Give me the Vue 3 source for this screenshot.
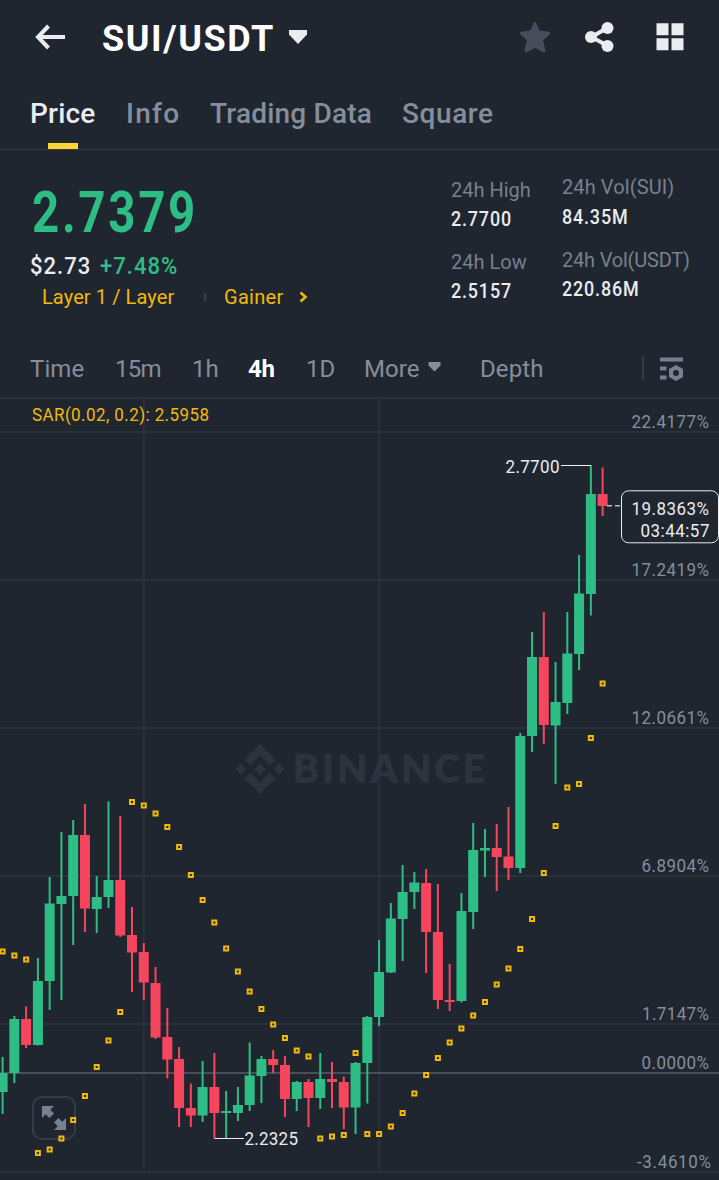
<script setup>
const STEP = 11.765
const FIRST = 2.6
const xAt = (i) => FIRST + STEP * i

// direction, high, body top, body bottom, low (chart units)
const candles = [
  ['up', 1057, 1073, 1092, 1114],
  ['up', 1016, 1019, 1073, 1083],
  ['down', 1006.5, 1019, 1045, 1048],
  ['up', 958, 981, 1045, 1045.5],
  ['up', 877, 903.5, 981, 1010],
  ['up', 832, 896, 904, 1000],
  ['up', 820, 835, 896, 945],
  ['down', 804, 835, 908.5, 932],
  ['up', 876, 897, 909, 933],
  ['up', 801.5, 880, 897, 908],
  ['down', 816, 880, 935.5, 937],
  ['down', 907, 935, 952.5, 992],
  ['down', 943, 952, 982.5, 1000],
  ['down', 967, 983, 1037.5, 1039],
  ['down', 1008, 1037, 1059.5, 1078.5],
  ['down', 1047, 1059, 1108, 1127],
  ['down', 1083.5, 1108, 1115.5, 1127],
  ['up', 1061, 1087, 1115.5, 1122],
  ['down', 1053, 1087, 1113, 1138.5],
  ['up', 1091, 1111, 1113, 1138],
  ['up', 1087, 1105, 1113, 1121],
  ['up', 1042.5, 1075.5, 1105, 1111],
  ['up', 1056, 1059, 1076, 1103],
  ['down', 1050, 1059, 1065, 1073],
  ['down', 1056, 1065, 1099, 1117],
  ['up', 1081, 1082, 1099, 1111],
  ['down', 1079, 1082, 1098, 1127],
  ['up', 1053, 1079, 1098, 1109],
  ['down', 1062, 1079, 1082, 1108],
  ['down', 1076.5, 1082, 1107.5, 1129],
  ['up', 1062, 1063, 1107.5, 1134],
  ['up', 1016, 1017, 1063, 1103.5],
  ['up', 940, 972, 1017, 1026],
  ['up', 903, 918.5, 972.5, 973],
  ['up', 865, 892, 919, 961],
  ['up', 872, 882.5, 892, 909],
  ['down', 869, 883, 932, 973],
  ['down', 884, 932, 1000, 1009],
  ['down', 964, 1000, 1002, 1011],
  ['up', 893, 911, 1001, 1002.5],
  ['up', 823, 850, 912, 929],
  ['up', 829, 848, 850.5, 877],
  ['down', 824, 848, 857, 891],
  ['down', 807, 856.5, 868, 880],
  ['up', 733, 736, 868, 873],
  ['up', 632, 657, 736, 752],
  ['down', 612, 657, 725, 744],
  ['up', 662, 702, 725.5, 784],
  ['up', 612, 653.5, 703, 714],
  ['up', 555, 593.5, 654, 670],
  ['up', 465, 494, 594, 615.5],
  ['down', 467.5, 494, 506, 516],
].map(([dir, high, top, bottom, low], i) => ({ dir, high, top, bottom, low, x: xAt(i) }))

const sar = [
  951.5, 955.5, 959.5, 1153, 1149.5, 1138.5, 1120, 1096, 1067, 1040.5, 1012, 802, 805.5,
  813.5, 827, 847, 875, 900, 922.5, 948.5, 971.5, 991.5, 1009, 1024.5, 1038, 1050.5, 1056.5,
  1138.5, 1136.5, 1135, 1053, 1134, 1134, 1126.5, 1113, 1093.5, 1075, 1058, 1042.5, 1028.5,
  1015.5, 1002, 984.5, 968.5, 949, 919, 873, 826, 787.5, 784, 738, 683.5,
].map((y, i) => ({ x: xAt(i), y }))

const gridY = [398, 432, 580, 728, 876, 1024, 1172]
const gridX = [143.8, 379.2]

// Chart lettering is condensed horizontally and tracked out to a fixed width
const CONDENSE = 0.92
const labels = [
  { cls: 'sar-label', text: 'SAR(0.02, 0.2): 2.5958', x: 32, y: 421, w: 177 },
  { cls: 'axis', text: '22.4177%', x: 631.5, y: 428, w: 77.5 },
  { cls: 'axis', text: '17.2419%', x: 631.5, y: 576, w: 77.5 },
  { cls: 'axis', text: '12.0661%', x: 631.5, y: 724, w: 77.5 },
  { cls: 'axis', text: '6.8904%', x: 641.5, y: 872, w: 67.5 },
  { cls: 'axis', text: '1.7147%', x: 642, y: 1020, w: 67 },
  { cls: 'axis', text: '0.0000%', x: 641.5, y: 1069, w: 67.5 },
  { cls: 'axis', text: '-3.4610%', x: 637, y: 1168, w: 74 },
  { cls: 'note', text: '2.7700', x: 505.5, y: 473, w: 54 },
  { cls: 'note', text: '2.2325', x: 244.5, y: 1145, w: 53.5 },
  { cls: 'note', text: '19.8363%', x: 631.5, y: 515, w: 77.5 },
  { cls: 'note', text: '03:44:57', x: 640.5, y: 537, w: 69 },
]

const tabs = ['Price', 'Info', 'Trading Data', 'Square']
const stats = [
  { name: '24h High', value: '2.7700' },
  { name: '24h Vol(SUI)', value: '84.35M' },
  { name: '24h Low', value: '2.5157' },
  { name: '24h Vol(USDT)', value: '220.86M' },
]
</script>

<template>
  <div class="screen">
    <header class="topbar">
      <svg class="back" width="32" height="26" viewBox="0 0 32 26">
        <path d="M14.5 2 L4 13 L14.5 24 M4 13 H31" fill="none" stroke="#eaecef" stroke-width="4" />
      </svg>
      <h1 class="pair">SUI/USDT</h1>
      <svg class="caret" width="18" height="14" viewBox="0 0 18 14">
        <path d="M0 0H18V4.5L9 14L0 4.5Z" fill="#eaecef" />
      </svg>
      <div class="actions">
        <svg width="32" height="32" viewBox="0 0 32 32">
          <path d="M16 2.500 L19.600 11 L29.500 12.300 L22.500 19 L25 30 L16 25.200 L7 30 L9.500 19 L2.500 12.300 L12.400 11Z" fill="#474d5c" stroke="#474d5c" stroke-width="3" stroke-linejoin="round" />
        </svg>
        <svg width="32" height="32" viewBox="0 0 32 32">
          <path d="M25 6.500 L8.500 16 L25 25" fill="none" stroke="#eaecef" stroke-width="4" />
          <circle cx="24.500" cy="6.900" r="6" fill="#eaecef" />
          <circle cx="8" cy="16" r="6" fill="#eaecef" />
          <circle cx="24.500" cy="25" r="6" fill="#eaecef" />
        </svg>
        <svg width="32" height="32" viewBox="0 0 32 32">
          <path d="M2.500 2.300h12v12h-12z M17.500 2.300h12v12h-12z M2.500 17.300h12v12h-12z M17.500 17.300h12v12h-12z" fill="#eaecef" />
        </svg>
      </div>
    </header>

    <nav class="tabs">
      <a v-for="(t, i) in tabs" :key="t" class="tab" :class="['t' + i, { active: i === 0 }]">{{ t }}</a>
    </nav>

    <section class="summary">
      <div class="quote">
        <div class="price">2.7379</div>
        <div class="sub"><span class="usd">$2.73</span><span class="chg">+7.48%</span></div>
        <div class="tags">
          <span class="layer">Layer 1 / Layer</span>
          <i class="tick"></i>
          <span class="gainer">Gainer</span>
          <svg width="9" height="12" viewBox="0 0 9 12">
            <path d="M1.500 1.500 L6.500 6 L1.500 10.500" fill="none" stroke="#f0b90b" stroke-width="2.600" />
          </svg>
        </div>
      </div>
      <dl class="stats">
        <div v-for="(s, i) in stats" :key="s.name" class="stat" :class="'s' + i">
          <dt>{{ s.name }}</dt>
          <dd>{{ s.value }}</dd>
        </div>
      </dl>
    </section>

    <div class="intervals">
      <span>Time</span>
      <span class="narrow">15m</span>
      <span>1h</span>
      <span class="on">4h</span>
      <span>1D</span>
      <span class="more">More
        <svg width="13" height="10" viewBox="0 0 13 10"><path d="M0.500 0H12.500V3.500L6.500 9.500L0.500 3.500Z" fill="#848e9c" /></svg>
      </span>
      <span>Depth</span>
      <i class="bar"></i>
      <svg class="settings" width="26" height="26" viewBox="0 0 26 26">
        <path d="M1 1.500H24V5.500H1Z M1 10.500H7.500V14.500H1Z M1 19.500H7.500V23.500H1Z" fill="#76808f" />
        <path fill-rule="evenodd" d="M17 9 L24 13 V21 L17 25 L10 21 V13Z M17 14 A3 3 0 1 0 17 20 A3 3 0 1 0 17 14Z" fill="#76808f" />
      </svg>
    </div>

    <svg class="chart" width="719" height="783" viewBox="0 397 719 783">
      <g class="grid">
        <line v-for="y in gridY" :key="'h' + y" x1="0" x2="719" :y1="y" :y2="y" />
        <line v-for="x in gridX" :key="'v' + x" :x1="x" :x2="x" y1="398" y2="1172" />
      </g>

      <g class="mark">
        <path d="M260 744 L275.500 759.500 L269.800 765.200 L260 755.500 L250.200 765.200 L244.500 759.500Z" />
        <path d="M260 794 L275.500 778.500 L269.800 772.800 L260 782.500 L250.200 772.800 L244.500 778.500Z" />
        <path d="M260 763.300 L265.700 769 L260 774.700 L254.300 769Z M241 763.300 L246.700 769 L241 774.700 L235.300 769Z M279 763.300 L284.700 769 L279 774.700 L273.300 769Z" />
        <text x="293" y="783" textLength="192">BINANCE</text>
      </g>

      <line class="zero" x1="0" x2="719" y1="1073" y2="1073" />

      <g class="expand">
        <rect x="33" y="1097" width="42" height="42" rx="9" />
        <path d="M42 1106H54L50.300 1109.700L54 1113.500L49.500 1118L45.700 1114.200L42 1118Z M66 1130H54L57.700 1126.300L54 1122.500L58.500 1118L62.300 1121.800L66 1118Z" />
      </g>

      <g v-for="(c, i) in candles" :key="'c' + i" :class="c.dir">
        <rect :x="c.x - 1" :y="c.high" width="2" :height="c.low - c.high" />
        <rect :x="c.x - 5" :y="c.top" width="10" :height="c.bottom - c.top" />
      </g>

      <rect v-for="(p, i) in sar" :key="'p' + i" class="sar" :x="p.x - 2" :y="p.y - 2" width="4" height="4" />

      <path class="lead" d="M561 465.500H591 M214.500 1138.500H244" />
      <line class="now" x1="607" x2="621" y1="505.700" y2="505.700" />
      <rect class="now-box" x="621.500" y="490.800" width="97" height="52" rx="7" />

      <text
        v-for="l in labels"
        :key="l.text + l.y"
        :class="l.cls"
        :transform="`translate(${l.x} ${l.y}) scale(${CONDENSE} 1)`"
        :textLength="l.w / CONDENSE"
      >{{ l.text }}</text>
    </svg>
  </div>
</template>

<style>
body {
  background: #202630;
}
</style>

<style scoped>
.screen {
  width: 719px;
  height: 1180px;
  overflow: hidden;
  background: #202630;
  color: #eaecef;
  font-family: Roboto, "Liberation Sans", sans-serif;
}
.topbar {
  display: flex;
  align-items: center;
  height: 76px;
  box-sizing: border-box;
  padding: 0 33px 0 34px;
}
.back {
  margin-top: -2px;
}
.pair {
  margin: 2px 0 0 36px;
  width: 187px;
  font-size: 36px;
  line-height: 48px;
  font-weight: 700;
  letter-spacing: 1.600px;
  color: #fff;
}
.caret {
  margin-top: -2px;
}
.actions {
  display: flex;
  gap: 32px;
  margin: -2px 0 0 auto;
}
.actions svg:last-child {
  margin-left: 7px;
}
.tabs {
  display: grid;
  grid-template-columns: 96px 84px 192px 1fr;
  height: 74px;
  box-sizing: border-box;
  padding-left: 30px;
  border-bottom: 1px solid #333943;
  font-size: 28px;
  font-weight: 500;
  line-height: 76px;
  color: #848e9c;
}
.tab {
  position: relative;
  white-space: nowrap;
  height: 73px;
}
.t0 {
  letter-spacing: 0.200px;
}
.t1 {
  letter-spacing: 1.300px;
}
.t2 {
  letter-spacing: 0.200px;
}
.t3 {
  letter-spacing: 0.600px;
}
.active {
  color: #eaecef;
}
.active::after {
  content: "";
  position: absolute;
  left: 18px;
  bottom: 0;
  width: 30px;
  height: 6px;
  background: #fcd535;
}
.summary {
  display: grid;
  grid-template-columns: 451px 1fr;
  height: 190px;
}
.price {
  width: 240px;
  margin: 31px 0 0 32px;
  font-size: 56.500px;
  line-height: 64px;
  font-weight: 700;
  letter-spacing: 3.200px;
  transform: scaleX(0.84);
  transform-origin: left;
  color: #2ebd85;
}
.sub {
  display: flex;
  gap: 11px;
  width: 260px;
  margin: 8px 0 0 30px;
  font-size: 24px;
  line-height: 26px;
  font-weight: 500;
  letter-spacing: 1.100px;
  transform: scaleX(0.92);
  transform-origin: left;
}
.usd {
  width: 65px;
}
.chg {
  color: #2ebd85;
}
.tags {
  display: flex;
  align-items: center;
  margin: 4px 0 0 42px;
  font-size: 20px;
  line-height: 28px;
  letter-spacing: 0.100px;
  color: #f0b90b;
}
.layer {
  width: 162px;
}
.tick {
  width: 2px;
  height: 8px;
  margin-right: 18px;
  background: #3a404c;
}
.gainer {
  width: 75px;
  letter-spacing: 0.300px;
}
.stats {
  display: grid;
  grid-template-columns: 111px 1fr;
  grid-template-rows: 72px 72px;
  align-content: start;
  margin: 0;
  padding-top: 26px;
}
.stat dt {
  font-size: 20px;
  line-height: 28px;
  color: #76808f;
}
.s1 dt {
  letter-spacing: 0.100px;
}
.stat dd {
  margin: 1px 0 0;
  font-size: 19.500px;
  line-height: 29px;
  font-weight: 500;
  letter-spacing: 0.900px;
  transform: scaleX(0.92);
  transform-origin: left;
}
.s1 {
  margin-top: -3px;
}
.s3 {
  margin-top: -2px;
}
.s3 dt {
  letter-spacing: -0.200px;
}
.s1 dd {
  margin-top: 2px;
}
.intervals {
  display: grid;
  grid-template-columns: 85px 77px 56px 58px 58px 116px 162px 17px 1fr;
  align-items: center;
  height: 57px;
  padding-left: 30px;
  font-size: 24px;
  line-height: 59px;
  letter-spacing: 0.100px;
  color: #848e9c;
}
.narrow {
  letter-spacing: -0.700px;
}
.on {
  color: #fff;
  font-weight: 700;
  letter-spacing: -0.300px;
}
.more svg {
  margin-left: 2px;
  vertical-align: 5px;
}
.bar {
  width: 2px;
  height: 24px;
  margin-top: -3px;
  background: #363c47;
}
.settings {
  margin-top: -2px;
}
.chart {
  display: block;
}
.chart text {
  font-family: Roboto, "Liberation Sans", sans-serif;
  font-size: 18.500px;
}
.grid line {
  stroke: #2b313c;
  stroke-width: 2;
}
.zero {
  stroke: #474d59;
  stroke-width: 2;
}
.mark {
  fill: #2d333e;
}
.chart .mark text {
  font-family: Lato, "Noto Sans", sans-serif;
  font-size: 39px;
  font-weight: 800;
}
.expand rect {
  fill: none;
  stroke: #363c47;
  stroke-width: 2;
}
.expand path {
  fill: #76808f;
}
.up {
  fill: #2ebd85;
}
.down {
  fill: #f6465d;
}
.sar {
  fill: #202630;
  stroke: #f0b90b;
  stroke-width: 2;
}
.lead {
  fill: none;
  stroke: #eaecef;
  stroke-width: 1;
}
.now {
  stroke: #b7bdc6;
  stroke-width: 1.500;
  stroke-dasharray: 5 3;
}
.now-box {
  fill: #202630;
  stroke: #eaecef;
  stroke-width: 1;
}
.sar-label {
  fill: #f0b90b;
}
.axis {
  fill: #848e9c;
}
.note {
  fill: #eaecef;
}
</style>
